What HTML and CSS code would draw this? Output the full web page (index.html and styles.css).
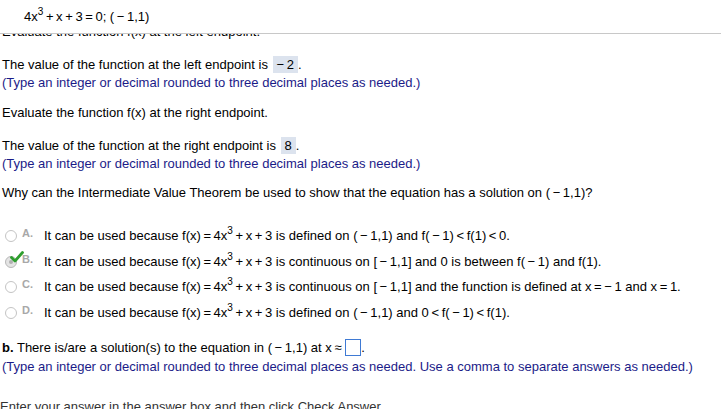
FILE: index.html
```html
<!DOCTYPE html>
<html>
<head>
<meta charset="utf-8">
<link rel="stylesheet" href="styles.css">
</head>
<body>
<div class="header"><span class="math">4x<sup>3</sup>&thinsp;+&thinsp;x&thinsp;+&thinsp;3&thinsp;=&thinsp;0; (&thinsp;&minus;&thinsp;1,1)</span></div>
<div class="scroll">
  <div class="content">
    <p class="cut">Evaluate the function f(x) at the left endpoint.</p>
    <div class="para p1">
      <div>The value of the function at the left endpoint is <span class="ans">&minus;&thinsp;2</span>.</div>
      <div class="hint">(Type an integer or decimal rounded to three decimal places as needed.)</div>
    </div>
    <div class="para p2">Evaluate the function f(x) at the right endpoint.</div>
    <div class="para p3">
      <div>The value of the function at the right endpoint is <span class="ans">8</span>.</div>
      <div class="hint">(Type an integer or decimal rounded to three decimal places as needed.)</div>
    </div>
    <div class="para p4">Why can the Intermediate Value Theorem be used to show that the equation has a solution on (&thinsp;&minus;&thinsp;1,1)?</div>
    <div class="options">
      <div class="opt"><span class="radio"></span><span class="letter">A.</span><span class="otext">It can be used because f(x)&thinsp;=&thinsp;4x<sup>3</sup>&thinsp;+&thinsp;x&thinsp;+&thinsp;3 is defined on (&thinsp;&minus;&thinsp;1,1) and f(&thinsp;&minus;&thinsp;1)&thinsp;&lt;&thinsp;f(1)&thinsp;&lt;&thinsp;0.</span></div>
      <div class="opt"><span class="radio sel"><svg class="check" viewBox="0 0 14 12" width="14" height="12"><path d="M1.5 6.5 L5 10 L12.5 1.5" fill="none" stroke="#2e9e2e" stroke-width="2.8" stroke-linecap="round" stroke-linejoin="round"/></svg></span><span class="letter">B.</span><span class="otext">It can be used because f(x)&thinsp;=&thinsp;4x<sup>3</sup>&thinsp;+&thinsp;x&thinsp;+&thinsp;3 is continuous on [&thinsp;&minus;&thinsp;1,1] and 0 is between f(&thinsp;&minus;&thinsp;1) and f(1).</span></div>
      <div class="opt"><span class="radio"></span><span class="letter">C.</span><span class="otext">It can be used because f(x)&thinsp;=&thinsp;4x<sup>3</sup>&thinsp;+&thinsp;x&thinsp;+&thinsp;3 is continuous on [&thinsp;&minus;&thinsp;1,1] and the function is defined at x&thinsp;=&thinsp;&minus;&thinsp;1 and x&thinsp;=&thinsp;1.</span></div>
      <div class="opt"><span class="radio"></span><span class="letter">D.</span><span class="otext">It can be used because f(x)&thinsp;=&thinsp;4x<sup>3</sup>&thinsp;+&thinsp;x&thinsp;+&thinsp;3 is defined on (&thinsp;&minus;&thinsp;1,1) and 0&thinsp;&lt;&thinsp;f(&thinsp;&minus;&thinsp;1)&thinsp;&lt;&thinsp;f(1).</span></div>
    </div>
    <div class="partb">
      <div class="bline"><b>b.</b> There is/are a solution(s) to the equation in (&thinsp;&minus;&thinsp;1,1) at x&thinsp;&asymp;&thinsp;<span class="box"></span>.</div>
      <div class="hint">(Type an integer or decimal rounded to three decimal places as needed. Use a comma to separate answers as needed.)</div>
    </div>
    <div class="footer">Enter your answer in the answer box and then click Check Answer.</div>
  </div>
</div>
</body>
</html>
```
FILE: styles.css
```css
html, body {
  margin: 0;
  padding: 0;
  background: #fff;
}
body {
  width: 721px;
  height: 410px;
  overflow: hidden;
  font-family: "Liberation Sans", Arial, sans-serif;
  font-size: 13px;
  line-height: 18px;
  color: #000;
}
.header {
  height: 34px;
  box-sizing: border-box;
  padding-left: 24px;
  padding-top: 8px;
  border-bottom: 1px solid #c8c8c8;
}
sup {
  font-size: 10px;
  line-height: 0;
  vertical-align: 6px;
}
.scroll {
  height: 375px;
  overflow: hidden;
}
.content {
  padding-left: 2px;
  margin-top: -11px;
}
.cut {
  margin: 0;
}
.p1 { margin-top: 15px; }
.p2 { margin-top: 12px; }
.p3 { margin-top: 15px; }
.p4 { margin-top: 11px; }
.hint {
  color: #1b1b88;
}
.ans {
  background: #dce3ee;
  padding: 1px 4px;
  margin-left: 1px;
}
.options {
  margin-top: 25px;
}
.opt {
  display: flex;
  align-items: flex-start;
  height: 25.7px;
}
.radio {
  position: relative;
  width: 10px;
  height: 10px;
  border: 1px solid #c4c4c4;
  border-radius: 50%;
  margin: 3px 0 0 3px;
  flex: none;
}
.radio.sel {
  background: #e4e4e4;
  border-color: #b8b8b8;
}
.radio.sel::after {
  content: "";
  position: absolute;
  left: 3px;
  top: 3px;
  width: 4px;
  height: 4px;
  border-radius: 50%;
  background: #b0b0b0;
}
.check {
  position: absolute;
  left: 4px;
  top: -6px;
  z-index: 1;
}
.letter {
  font-size: 11px;
  font-weight: bold;
  color: #a8a8a8;
  line-height: 12px;
  margin-left: 5px;
  width: 22px;
  flex: none;
}
.otext {
  line-height: 18px;
}
.partb {
  margin-top: 9px;
}
.bline {
  height: 19px;
}
.box {
  display: inline-block;
  width: 14px;
  height: 15px;
  border: 1px solid #3f7ad4;
  vertical-align: -4px;
  margin-left: 1px;
}
.footer {
  margin-top: 22px;
  margin-left: -2px;
  color: #333;
}
```
